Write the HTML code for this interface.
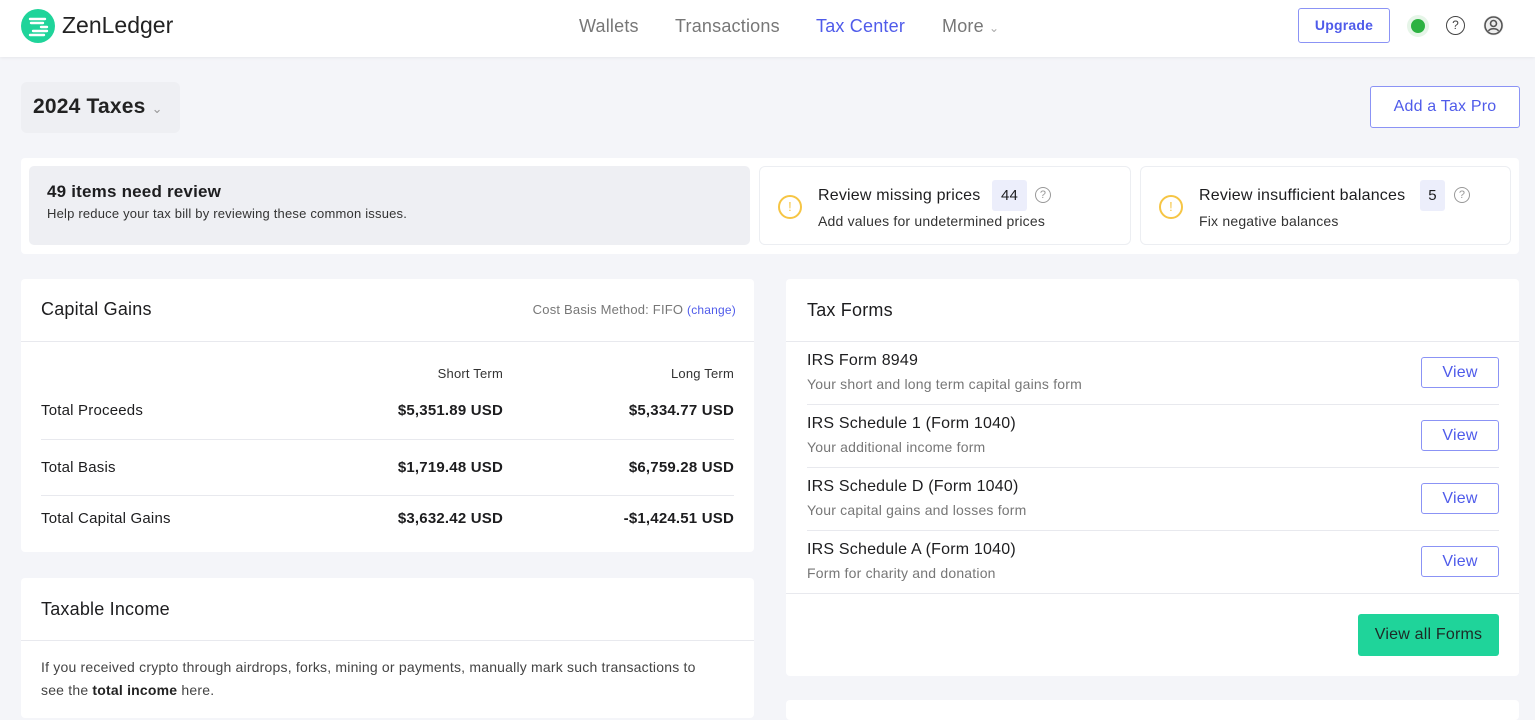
<!DOCTYPE html><html><head><style>
*{box-sizing:border-box;margin:0;padding:0}
body{width:1535px;height:704px;overflow:hidden;background:#f4f5f9;font-family:"Liberation Sans",sans-serif;color:#1d1d1f;position:relative;letter-spacing:0.2px}
.a{position:absolute}
.card{position:absolute;background:#fff;border-radius:4px}
.btn{position:absolute;border:1px solid #8b93f5;border-radius:3px;color:#4f5bea;background:#fff;text-align:center}
.t{position:absolute;white-space:nowrap}
.hr{position:absolute;height:1px;background:#e8e9ee}
</style></head><body>
<div class="a" style="left:0;top:0;width:1535px;height:57px;background:#fff;box-shadow:0 1px 3px rgba(0,0,0,.06)"></div>
<svg class="a" style="left:21px;top:9px" width="34" height="34" viewBox="0 0 34 34"><circle cx="17" cy="17" r="17" fill="#1fd49a"/><g stroke="#fff" stroke-width="2.4" stroke-linecap="round"><path d="M9 10h15M10 14h12M20 18h6M12 22h14M9 26h14"/></g></svg>
<div class="t" style="left:62px;top:12px;font-size:23px;color:#222;letter-spacing:0">ZenLedger</div>
<div class="t" style="left:579px;top:16px;font-size:18px;color:#777">Wallets</div>
<div class="t" style="left:675px;top:16px;font-size:18px;color:#777">Transactions</div>
<div class="t" style="left:816px;top:16px;font-size:18px;color:#4f5bea">Tax Center</div>
<div class="t" style="left:942px;top:16px;font-size:18px;color:#777">More <span style="font-size:12px;color:#aaa">&#8964;</span></div>
<div class="btn" style="left:1298px;top:8px;width:92px;height:35px;line-height:33px;font-size:14px;font-weight:bold">Upgrade</div>
<div class="a" style="left:1407px;top:15px;width:22px;height:22px;border-radius:50%;background:#e6f5e8"></div>
<div class="a" style="left:1411px;top:19px;width:14px;height:14px;border-radius:50%;background:#2db242"></div>
<div class="a" style="left:1446px;top:16px;width:19px;height:19px;border-radius:50%;border:1.6px solid #444;font-size:12px;text-align:center;line-height:16px;color:#444">?</div>
<svg class="a" style="left:1483px;top:15px" width="21" height="21" viewBox="0 0 21 21"><circle cx="10.5" cy="10.5" r="10" fill="#eee"/><circle cx="10.5" cy="10.5" r="8.5" fill="none" stroke="#555" stroke-width="1.6"/><circle cx="10.5" cy="8.5" r="3" fill="none" stroke="#555" stroke-width="1.6"/><path d="M5.5 16c1.5-3 8.5-3 10 0" fill="none" stroke="#555" stroke-width="1.6"/></svg>

<div class="a" style="left:21px;top:82px;width:159px;height:51px;background:#eeeff3;border-radius:6px"></div>
<div class="t" style="left:33px;top:95px;font-size:21px;font-weight:bold;color:#222">2024 Taxes <span style="font-size:13px;color:#999;font-weight:normal">&#8964;</span></div>
<div class="btn" style="left:1370px;top:86px;width:150px;height:42px;line-height:40px;font-size:16px">Add a Tax Pro</div>

<div class="card" style="left:21px;top:158px;width:1498px;height:96px"></div>
<div class="a" style="left:29px;top:166px;width:721px;height:79px;background:#eeeff3;border-radius:5px"></div>
<div class="t" style="left:47px;top:182px;font-size:17px;font-weight:bold">49 items need review</div>
<div class="t" style="left:47px;top:206px;font-size:13px;color:#333">Help reduce your tax bill by reviewing these common issues.</div>
<div class="a" style="left:759px;top:166px;width:372px;height:79px;border:1px solid #eceef2;border-radius:6px"></div>
<div class="a" style="left:1140px;top:166px;width:371px;height:79px;border:1px solid #eceef2;border-radius:6px"></div>
<div class="a" style="left:778px;top:195px;width:24px;height:24px;border-radius:50%;border:2px solid #f6c544;color:#f6c544;font-size:13px;text-align:center;line-height:20px">!</div>
<div class="a" style="left:1159px;top:195px;width:24px;height:24px;border-radius:50%;border:2px solid #f6c544;color:#f6c544;font-size:13px;text-align:center;line-height:20px">!</div>
<div class="t" style="left:818px;top:187px;font-size:16px">Review missing prices</div>
<div class="a" style="left:992px;top:180px;width:35px;height:31px;background:#eceefb;border-radius:3px;font-size:15px;text-align:center;line-height:31px">44</div>
<div class="a" style="left:1035px;top:187px;width:16px;height:16px;border-radius:50%;border:1.3px solid #999;font-size:11px;color:#999;text-align:center;line-height:14px">?</div>
<div class="t" style="left:818px;top:213px;font-size:14px;color:#333">Add values for undetermined prices</div>
<div class="t" style="left:1199px;top:187px;font-size:16px">Review insufficient balances</div>
<div class="a" style="left:1420px;top:180px;width:25px;height:31px;background:#eceefb;border-radius:3px;font-size:15px;text-align:center;line-height:31px">5</div>
<div class="a" style="left:1454px;top:187px;width:16px;height:16px;border-radius:50%;border:1.3px solid #999;font-size:11px;color:#999;text-align:center;line-height:14px">?</div>
<div class="t" style="left:1199px;top:213px;font-size:14px;color:#333">Fix negative balances</div>

<div class="card" style="left:21px;top:279px;width:733px;height:273px"></div>
<div class="t" style="left:41px;top:299px;font-size:18px">Capital Gains</div>
<div class="t" style="right:799px;top:302px;font-size:13px;color:#777">Cost Basis Method: FIFO <span style="color:#4f5bea;font-size:12px">(change)</span></div>
<div class="hr" style="left:21px;top:341px;width:733px"></div>
<div class="t" style="right:1032px;top:366px;font-size:13px;color:#333">Short Term</div>
<div class="t" style="right:801px;top:366px;font-size:13px;color:#333">Long Term</div>
<div class="t" style="left:41px;top:402px;font-size:15px">Total Proceeds</div>
<div class="t" style="right:1032px;top:402px;font-size:15px;font-weight:bold">$5,351.89 USD</div>
<div class="t" style="right:801px;top:402px;font-size:15px;font-weight:bold">$5,334.77 USD</div>
<div class="hr" style="left:41px;top:439px;width:693px"></div>
<div class="t" style="left:41px;top:459px;font-size:15px">Total Basis</div>
<div class="t" style="right:1032px;top:459px;font-size:15px;font-weight:bold">$1,719.48 USD</div>
<div class="t" style="right:801px;top:459px;font-size:15px;font-weight:bold">$6,759.28 USD</div>
<div class="hr" style="left:41px;top:495px;width:693px"></div>
<div class="t" style="left:41px;top:510px;font-size:15px">Total Capital Gains</div>
<div class="t" style="right:1032px;top:510px;font-size:15px;font-weight:bold">$3,632.42 USD</div>
<div class="t" style="right:801px;top:510px;font-size:15px;font-weight:bold">-$1,424.51 USD</div>

<div class="card" style="left:21px;top:578px;width:733px;height:140px"></div>
<div class="t" style="left:41px;top:599px;font-size:18px">Taxable Income</div>
<div class="hr" style="left:21px;top:640px;width:733px"></div>
<div class="t" style="left:41px;top:659px;font-size:14px;color:#444">If you received crypto through airdrops, forks, mining or payments, manually mark such transactions to</div>
<div class="t" style="left:41px;top:682px;font-size:14px;color:#444">see the <b style="color:#222">total income</b> here.</div>

<div class="card" style="left:786px;top:279px;width:733px;height:397px"></div>
<div class="card" style="left:786px;top:700px;width:733px;height:20px"></div>
<div class="t" style="left:807px;top:300px;font-size:18px">Tax Forms</div>
<div class="hr" style="left:786px;top:341px;width:733px"></div>
<div class="t" style="left:807px;top:352px;font-size:16px">IRS Form 8949</div>
<div class="t" style="left:807px;top:376px;font-size:14px;color:#777">Your short and long term capital gains form</div>
<div class="btn" style="left:1421px;top:357px;width:78px;height:31px;line-height:29px;font-size:16px">View</div>
<div class="hr" style="left:807px;top:404px;width:692px"></div>
<div class="t" style="left:807px;top:415px;font-size:16px">IRS Schedule 1 (Form 1040)</div>
<div class="t" style="left:807px;top:439px;font-size:14px;color:#777">Your additional income form</div>
<div class="btn" style="left:1421px;top:420px;width:78px;height:31px;line-height:29px;font-size:16px">View</div>
<div class="hr" style="left:807px;top:467px;width:692px"></div>
<div class="t" style="left:807px;top:478px;font-size:16px">IRS Schedule D (Form 1040)</div>
<div class="t" style="left:807px;top:502px;font-size:14px;color:#777">Your capital gains and losses form</div>
<div class="btn" style="left:1421px;top:483px;width:78px;height:31px;line-height:29px;font-size:16px">View</div>
<div class="hr" style="left:807px;top:530px;width:692px"></div>
<div class="t" style="left:807px;top:541px;font-size:16px">IRS Schedule A (Form 1040)</div>
<div class="t" style="left:807px;top:565px;font-size:14px;color:#777">Form for charity and donation</div>
<div class="btn" style="left:1421px;top:546px;width:78px;height:31px;line-height:29px;font-size:16px">View</div>
<div class="hr" style="left:786px;top:593px;width:733px"></div>
<div class="a" style="left:1358px;top:614px;width:141px;height:42px;background:#1fd49a;border-radius:3px;color:#1d2a26;font-size:16px;text-align:center;line-height:42px">View all Forms</div>
</body></html>
